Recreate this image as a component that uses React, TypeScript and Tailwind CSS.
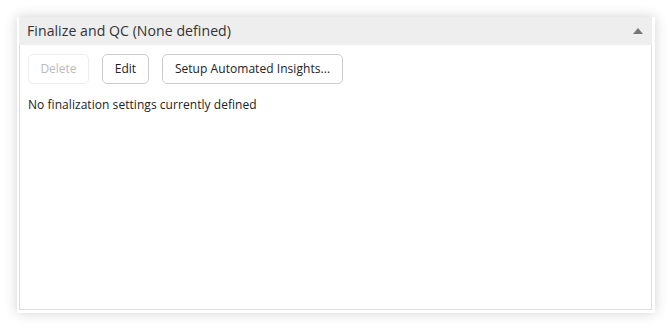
export default function App() {
  return (
    <div className="w-[672px] h-[329px] bg-white pt-[17px] pl-[17px]" style={{ fontFamily: '"Open Sans", sans-serif' }}>
      <div className="w-[638px] h-[296px] bg-white pl-[2px] pr-[3px] pb-[3px] flex flex-col shadow-[0_0_12px_rgba(0,0,0,0.18)]">
        <div className="h-[28px] bg-[#eeeeee] flex items-center justify-between pl-[8px] pr-[9px]">
          <span className="text-[14.1px] text-[#333333] leading-none tracking-[0.05px]">Finalize and QC (None defined)</span>
          <svg width="10" height="6" viewBox="0 0 10 6" className="mt-[-1px]">
            <polygon points="5,0 10,6 0,6" fill="#777777" />
          </svg>
        </div>
        <div className="flex-1 border border-t-0 border-[#dddddd] pt-[9px] pl-[8px]">
          <div className="flex gap-[13px]">
            <button className="h-[30px] w-[61px] rounded-[5px] border border-[#eeeeee] text-[12px] text-[#bbbbbb] bg-white">Delete</button>
            <button className="h-[30px] w-[47px] rounded-[5px] border border-[#cccccc] text-[12px] text-[#222222] bg-white">Edit</button>
            <button className="h-[30px] w-[181px] rounded-[5px] border border-[#cccccc] text-[12px] text-[#222222] bg-white tracking-[0.05px]">Setup Automated Insights...</button>
          </div>
          <div className="mt-[12px] text-[12px] text-[#222222] tracking-[0.05px]">No finalization settings currently defined</div>
        </div>
      </div>
    </div>
  );
}
